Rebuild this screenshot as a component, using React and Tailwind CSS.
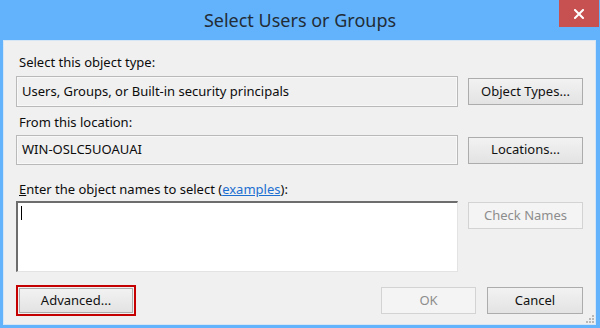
import React from "react";

const font = { fontFamily: '"Noto Sans", "Open Sans", sans-serif' };

function Btn({ children, disabled, className = "" }) {
  return (
    <div
      className={
        "flex items-center justify-center h-[27px] border text-[13px] " +
        (disabled
          ? "border-[#d3d3d3] bg-[#f4f4f4] text-[#8d8d8d] "
          : "border-[#acacac] bg-gradient-to-b from-[#f2f2f2] to-[#e3e3e3] text-[#111] ") +
        className
      }
    >
      {children}
    </div>
  );
}

export default function App() {
  return (
    <div className="w-[600px] h-[328px] bg-[#63b3fc] flex flex-col" style={font}>
      <div className="h-[40px] flex relative">
        <div className="flex-1 flex items-center justify-center text-[18px] text-[#222c36]">
          Select Users or Groups
        </div>
        <div className="absolute right-[1px] top-0 w-[40px] h-[27px] bg-[#c75050] flex items-center justify-center">
          <svg width="10" height="10" viewBox="0 0 10 10">
            <path d="M1 1 L9 9 M9 1 L1 9" stroke="#ffffff" strokeWidth="2" strokeLinecap="square" />
          </svg>
        </div>
      </div>
      <div className="flex-1 mx-[3px] mb-[3px] mr-[4px] bg-[#f0f0f0] border border-[#d7e6f5] relative pl-[12px] pr-[12px] text-[13px] text-[#0c0c0c]">
        <div className="mt-[13px] h-[16px] leading-[16px] pl-[3px]">Select this object type:</div>
        <div className="mt-[6px] flex items-center">
          <div className="w-[442px] h-[31px] border border-[#b9b9b9] shadow-[inset_0_0_0_1px_#f8f8f8] bg-[#f0f0f0] flex items-center pl-[5px]">
            Users, Groups, or Built-in security principals
          </div>
          <Btn className="ml-[10px] w-[115px]">Object Types...</Btn>
        </div>
        <div className="mt-[7px] h-[16px] leading-[16px] pl-[3px]">From this location:</div>
        <div className="mt-[5px] flex items-center">
          <div className="w-[442px] h-[30px] border border-[#b9b9b9] shadow-[inset_0_0_0_1px_#f8f8f8] bg-[#f0f0f0] flex items-center pl-[5px]">
            WIN-OSLC5UOAUAI
          </div>
          <Btn className="ml-[10px] w-[115px]">Locations...</Btn>
        </div>
        <div className="mt-[16px] h-[16px] leading-[16px] pl-[3px]">
          <span className="underline">E</span>nter the object names to select (
          <span className="text-[#1c6fd0] underline">examples</span>):
        </div>
        <div className="mt-[4px] flex items-start">
          <div className="w-[442px] h-[71px] bg-white border border-[#e3e3e3] border-t-[2px] border-l-[2px] border-t-[#6d6d6d] border-l-[#6d6d6d] relative">
            <div className="absolute left-[3px] top-[3px] w-[1px] h-[14px] bg-black" />
          </div>
          <Btn disabled className="ml-[10px] mt-[1px] w-[115px]">Check Names</Btn>
        </div>
        <div className="mt-[13px] flex items-center">
          <div className="border-2 border-[#c40000] w-[120px] h-[31px] p-[1px]">
            <Btn className="w-full h-full">Advanced...</Btn>
          </div>
          <div className="flex-1" />
          <Btn disabled className="w-[95px]">OK</Btn>
          <Btn className="ml-[11px] w-[96px] border-[#9a9a9a]">Cancel</Btn>
        </div>
        <div className="absolute right-[1px] bottom-[1px]">
          <svg width="8" height="8" viewBox="0 0 8 8">
            <rect x="6" y="0" width="2" height="2" fill="#b8b8b8" />
            <rect x="3" y="3" width="2" height="2" fill="#b8b8b8" />
            <rect x="6" y="3" width="2" height="2" fill="#b8b8b8" />
            <rect x="0" y="6" width="2" height="2" fill="#b8b8b8" />
            <rect x="3" y="6" width="2" height="2" fill="#b8b8b8" />
            <rect x="6" y="6" width="2" height="2" fill="#b8b8b8" />
          </svg>
        </div>
      </div>
    </div>
  );
}
